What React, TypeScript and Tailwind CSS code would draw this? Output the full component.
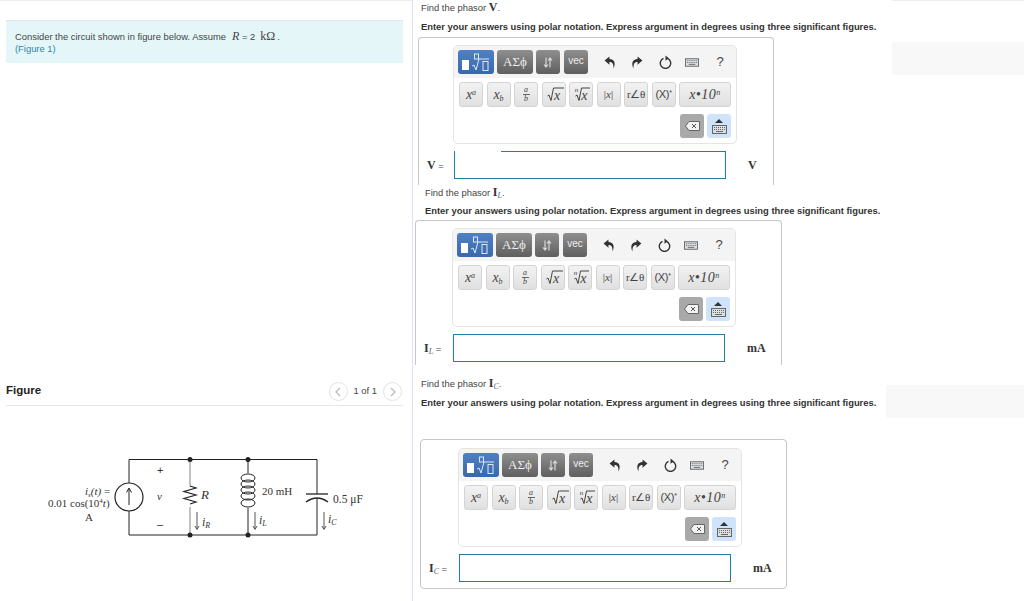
import { ReactNode } from "react";

const mathFont = "font-['Liberation_Serif',serif]";

function ToolButton({ className, children }: { className?: string; children?: ReactNode }) {
  return (
    <div
      className={`flex h-[25px] w-6 shrink-0 items-center justify-center rounded-[3px] border border-[#d4d4d4] bg-gradient-to-b from-[#f2f2f2] to-[#e0e0e0] text-[#444] ${className ?? ""}`}
    >
      {children}
    </div>
  );
}

function DarkButton({ className, children }: { className?: string; children?: ReactNode }) {
  return (
    <div
      className={`flex h-6 shrink-0 items-center justify-center rounded-[3px] bg-gradient-to-b from-[#8f8f8f] to-[#5f5f5f] text-[#eee] ${className ?? ""}`}
    >
      {children}
    </div>
  );
}

function MiniKeyboard() {
  return (
    <svg width="15" height="9" viewBox="0 0 15 9">
      <rect x="0.5" y="0.5" width="14" height="8" fill="#dcdfe3" stroke="#666" />
      <path d="M2 2.5h11M2 4.5h11" stroke="#666" strokeDasharray="1 1" />
      <path d="M4 6.5h7" stroke="#666" />
    </svg>
  );
}

function Radical({ width }: { width: number }) {
  return (
    <svg width={width} height="15" viewBox={`0 0 ${width} 15`} fill="none" stroke="#444" className="shrink-0">
      <path d={`M0.500 9l1.500 -1 2 5.500 2.500 -12.500H${width}`} />
    </svg>
  );
}

function Toolbar() {
  return (
    <div className="h-[99px] w-[284px] shrink-0 overflow-hidden rounded-[5px] border border-[#e4e4e4] bg-white">
      <div className="flex h-[32px] items-center bg-[#f4f4f4] pl-[4px]">
        <div className="flex h-6 w-9 items-center justify-center gap-[2px] rounded-[3px] bg-gradient-to-b from-[#5080c4] to-[#3a68ae]">
          <div className="mt-[5px] h-[10px] w-[7px] bg-white" />
          <svg width="19" height="19" viewBox="0 0 19 19" fill="none" stroke="#dfe9f5" strokeWidth="1">
            <rect x="3.500" y="1" width="4" height="5" />
            <path d="M1 13l2 -1 2 5 3 -11h10" />
            <rect x="12" y="8.500" width="5" height="9" />
          </svg>
        </div>
        <DarkButton className={`ml-[3px] w-9 text-[13px] ${mathFont}`}>ΑΣϕ</DarkButton>
        <DarkButton className="ml-[3px] w-6">
          <svg width="10" height="11" viewBox="0 0 10 11" fill="none" stroke="#d8d8d8" strokeWidth="1.2">
            <path d="M3 0.500v9M1 7.500l2 2.500 2-2.500M7 10.500v-9M5 3.500l2-2.500 2 2.500" />
          </svg>
        </DarkButton>
        <DarkButton className="ml-[4px] w-6 pb-[3px] text-[10px]">vec</DarkButton>
        <div className="ml-[15px] flex w-[14px] justify-center">
          <svg width="12" height="13" viewBox="0 0 11 12" fill="#333">
            <path d="M5 0.500L0.500 4.200 5 8V5.600C7.500 5.600 8.800 7 8.800 11.500 10.800 7 10 3 5 2.800z" />
          </svg>
        </div>
        <div className="ml-[13px] flex w-[14px] justify-center">
          <svg width="12" height="13" viewBox="0 0 11 12" fill="#333">
            <path d="M6 0.500L10.500 4.200 6 8V5.600C3.500 5.600 2.200 7 2.200 11.500 0.200 7 1 3 6 2.800z" />
          </svg>
        </div>
        <div className="ml-[14px] flex w-[14px] justify-center">
          <svg width="13" height="14" viewBox="0 0 13 14" fill="none">
            <path d="M4.500 3.400A5.200 5.200 0 1 0 8.500 3.400" stroke="#333" strokeWidth="1.400" />
            <path d="M6.500 0.500L9.800 3.200 6.500 5.800z" fill="#333" />
          </svg>
        </div>
        <div className="ml-[13px] flex w-[14px] justify-center">
          <MiniKeyboard />
        </div>
        <div className="ml-[14px] w-[14px] text-center text-[13px] text-[#444]">?</div>
      </div>
      <div className="flex gap-[3.5px] pl-[5px] pt-[4px]">
        <ToolButton className={`text-[14px] italic ${mathFont}`}>
          <span>
            x<sup className="text-[8px]">a</sup>
          </span>
        </ToolButton>
        <ToolButton className={`text-[14px] italic ${mathFont}`}>
          <span>
            x<sub className="text-[8px]">b</sub>
          </span>
        </ToolButton>
        <ToolButton className={`flex-col text-[8px] italic leading-[8px] ${mathFont}`}>
          <span>a</span>
          <span className="h-px w-[7px] bg-[#666]" />
          <span>b</span>
        </ToolButton>
        <ToolButton className={`text-[14px] italic ${mathFont}`}>
          <Radical width={17} />
          <span className="ml-[-10px] mt-[2px]">x</span>
        </ToolButton>
        <ToolButton className={`text-[14px] italic ${mathFont}`}>
          <span className="mb-[8px] mr-[-3px] text-[7px]">n</span>
          <Radical width={15} />
          <span className="ml-[-9px] mt-[2px]">x</span>
        </ToolButton>
        <ToolButton className={`text-[11px] ${mathFont}`}>
          <span>
            |<i>x</i>|
          </span>
        </ToolButton>
        <ToolButton className={`text-[11px] tracking-[-0.3px] ${mathFont}`}>r∠θ</ToolButton>
        <ToolButton className="text-[11px] tracking-[-0.3px]">
          <span>
            (X)<sup className="text-[7px]">*</sup>
          </span>
        </ToolButton>
        <ToolButton className={`w-[52px] text-[14px] italic tracking-[0.5px] ${mathFont}`}>
          <span>
            x<span className="not-italic">•</span>10<sup className="text-[8px]">n</sup>
          </span>
        </ToolButton>
      </div>
      <div className="flex justify-end gap-[3px] pr-[5px] pt-[7px]">
        <div className="flex h-6 w-6 items-center justify-center rounded-[3px] bg-[#a9a9a9]">
          <svg width="15" height="10" viewBox="0 0 15 10">
            <path d="M4 0.500H14.500V9.500H4L0.500 5z" fill="#f2f2f2" stroke="#666" />
            <path d="M7 3l4 4M11 3l-4 4" stroke="#555" />
          </svg>
        </div>
        <div className="flex h-6 w-6 flex-col items-center justify-center gap-[2px] rounded-[3px] bg-[#cfe4fb]">
          <div className="h-0 w-0 border-x-[4px] border-b-[4px] border-x-transparent border-b-[#333]" />
          <MiniKeyboard />
        </div>
      </div>
    </div>
  );
}

function Answer({
  label,
  unit,
  className,
  inset,
  labelCol,
  openTop,
}: {
  label: ReactNode;
  unit: string;
  className: string;
  inset: string;
  labelCol: string;
  openTop?: boolean;
}) {
  return (
    <div className={`rounded-t-[4px] border-x border-t border-[#c6c6c6] ${className}`}>
      <div className={inset}>
        <Toolbar />
      </div>
      <div className="mt-[7px] flex items-center">
        <div className={`${labelCol} shrink-0 pl-[8px] text-[9.4px] text-[#444]`}>{label} =</div>
        <div className={`h-7 w-[272px] shrink-0 border border-[#1f7f9e] bg-white ${openTop ? "border-t-0" : ""}`}>
          {openTop && <div className="ml-[46px] h-px bg-[#1f7f9e]" />}
        </div>
        <div className={`ml-[22px] text-[12px] font-bold text-[#333] ${mathFont}`}>{unit}</div>
      </div>
    </div>
  );
}

function Symbol({ symbol, sub }: { symbol: string; sub?: string }) {
  return (
    <>
      <b className={`text-[12px] text-[#333] ${mathFont}`}>{symbol}</b>
      {sub && <sub className={`text-[8px] italic text-[#666] ${mathFont}`}>{sub}</sub>}
    </>
  );
}

function Prompt({ symbol, sub, className, gap }: { symbol: string; sub?: string; className: string; gap: string }) {
  return (
    <div className={className}>
      <div className="h-[14px] text-[9.4px] leading-[14px] text-[#444]">
        Find the phasor <Symbol symbol={symbol} sub={sub} />.
      </div>
      <div className={`${gap} h-[14px] text-[9.4px] font-bold leading-[14px] text-[#333]`}>
        Enter your answers using polar notation. Express argument in degrees using three significant figures.
      </div>
    </div>
  );
}

function Circuit() {
  return (
    <svg width="380" height="120" viewBox="0 440 380 120" className="block">
      <g fill="none" stroke="#222" strokeWidth="1">
        <path d="M129 483V459.500H317V494M129 511V535H317V498" />
        <circle cx="129" cy="497" r="14" strokeWidth="1.200" />
        <path d="M129 505V489M126.500 492.500L129 488 131.500 492.500" />
        <path d="M190 459.500V486M190 507V535" stroke="#999" strokeWidth="1.200" />
        <path d="M190 486l6 2 -12 3.500 12 3.500 -12 3.500 12 3.500 -6 2" strokeWidth="1.200" />
        <path d="M248 459.500V473M248 508V535" />
        <ellipse cx="248" cy="478" rx="7" ry="4" />
        <ellipse cx="248" cy="484" rx="7" ry="4" />
        <ellipse cx="248" cy="490" rx="7" ry="4" />
        <ellipse cx="248" cy="496" rx="7" ry="4" />
        <ellipse cx="248" cy="503" rx="7" ry="4" />
        <path d="M306 494H328" strokeWidth="1.300" />
        <path d="M306 502Q317 494 328 502" strokeWidth="1.300" />
        <path
          d="M197 512V529M195 526L197 529.500 199 526M255 512V529M253 526L255 529.500 257 526M324 512V529M322 526L324 529.500 326 526"
          stroke="#555"
        />
      </g>
      <g fill="#222">
        <circle cx="190" cy="459.500" r="2.500" />
        <circle cx="190" cy="535" r="2.500" />
        <circle cx="248" cy="459.500" r="2.500" />
        <circle cx="248" cy="535" r="2.500" />
      </g>
      <g className={mathFont} fontSize="11" fill="#333">
        <text x="85" y="495">
          <tspan fontStyle="italic">i</tspan>
          <tspan fontSize="7" dy="2" fontStyle="italic">s</tspan>
          <tspan dy="-2" fontStyle="italic">(t)</tspan> =
        </text>
        <text x="48" y="507">
          0.01 cos(10<tspan fontSize="7" dy="-4">4</tspan>
          <tspan dy="4" fontStyle="italic">t</tspan>)
        </text>
        <text x="85" y="521">A</text>
        <text x="157" y="474" fontFamily="Liberation Sans">+</text>
        <text x="157" y="500" fontStyle="italic">v</text>
        <text x="157" y="528" fontFamily="Liberation Sans">–</text>
        <text x="201" y="499" fontStyle="italic" fontSize="13">R</text>
        <text x="262" y="495">20 mH</text>
        <text x="333" y="503" fontSize="11.500">0.5 μF</text>
        <text x="202" y="526" fontStyle="italic" fontSize="12">
          i<tspan fontSize="8" dy="2">R</tspan>
        </text>
        <text x="259" y="524" fontStyle="italic" fontSize="12">
          i<tspan fontSize="8" dy="2">L</tspan>
        </text>
        <text x="328" y="523" fontStyle="italic" fontSize="12">
          i<tspan fontSize="8" dy="2">C</tspan>
        </text>
      </g>
    </svg>
  );
}

function Chevron({ dir }: { dir: "l" | "r" }) {
  return (
    <div className="flex h-[19px] w-[19px] items-center justify-center rounded-full border border-[#e3e3e3]">
      <svg width="6" height="10" viewBox="0 0 6 10" fill="none" stroke="#b9b9b9" strokeWidth="1.200">
        <path d={dir === "l" ? "M5 1L1 5l4 4" : "M1 1l4 4-4 4"} />
      </svg>
    </div>
  );
}

export default function App() {
  return (
    <div className="relative flex h-[601px] w-[1024px] overflow-hidden bg-white font-['Liberation_Sans',sans-serif]">
      <div className="w-[413px] shrink-0 border-r border-[#d9e3f0]">
        <div className="h-[1px] bg-[#eeeeee]" />
        <div className="ml-[6px] mt-[19px] h-[43px] w-[397px] border-t border-[#dfe5ea] bg-[#e4f6f8] pl-[9px] pt-[9px] text-[9.4px] leading-[12px] text-[#444]">
          <div>
            Consider the circuit shown in figure below. Assume
            <i className={`ml-[6px] text-[12px] ${mathFont}`}>R</i> = 2
            <span className={`ml-[5px] text-[12px] ${mathFont}`}>kΩ</span>
            <span className="ml-[2px]">.</span>
          </div>
          <div className="text-[#2a86a8]">(Figure 1)</div>
        </div>
        <div className="ml-[6px] mt-[317px] flex h-[26px] w-[397px] items-center border-b border-[#e4e8ee] pb-[2px] pr-[1px]">
          <div className="mb-[2px] text-[11.5px] font-bold text-[#222]">Figure</div>
          <div className="ml-auto flex items-center gap-[6px] text-[9.4px] text-[#444]">
            <Chevron dir="l" />
            <span>1 of 1</span>
            <Chevron dir="r" />
          </div>
        </div>
        <div className="mt-[34px]">
          <Circuit />
        </div>
      </div>
      <div className="w-[611px] shrink-0">
        <Prompt symbol="V" className="ml-[8px]" gap="mt-[6px]" />
        <Answer
          label={<Symbol symbol="V" />}
          unit="V"
          className="ml-[5px] mt-[3px] h-[148px] w-[356px]"
          inset="pl-[34px] pt-[7px]"
          labelCol="w-[35px]"
          openTop
        />
        <Prompt symbol="I" sub="L" className="ml-[12px]" gap="mt-[5px]" />
        <Answer
          label={<Symbol symbol="I" sub="L" />}
          unit="mA"
          className="ml-[2px] mt-[2px] h-[145px] w-[367px]"
          inset="pl-[36px] pt-[7px]"
          labelCol="w-[37px]"
        />
        <Prompt symbol="I" sub="C" className="ml-[8px] mt-[11px]" gap="mt-[6px]" />
        <Answer
          label={<Symbol symbol="I" sub="C" />}
          unit="mA"
          className="ml-[7px] mt-[29px] h-[150px] w-[367px] rounded-b-[4px] border-b"
          inset="pl-[37px] pt-[8px]"
          labelCol="w-[38px]"
        />
      </div>
      <div className="absolute left-[892px] top-0 h-px w-[132px] bg-[#eeeeee]" />
      <div className="absolute left-[892px] top-[42px] h-[33px] w-[132px] bg-[#f8f8f8]" />
      <div className="absolute left-[886px] top-[385px] h-[33px] w-[138px] bg-[#f8f8f8]" />
    </div>
  );
}
